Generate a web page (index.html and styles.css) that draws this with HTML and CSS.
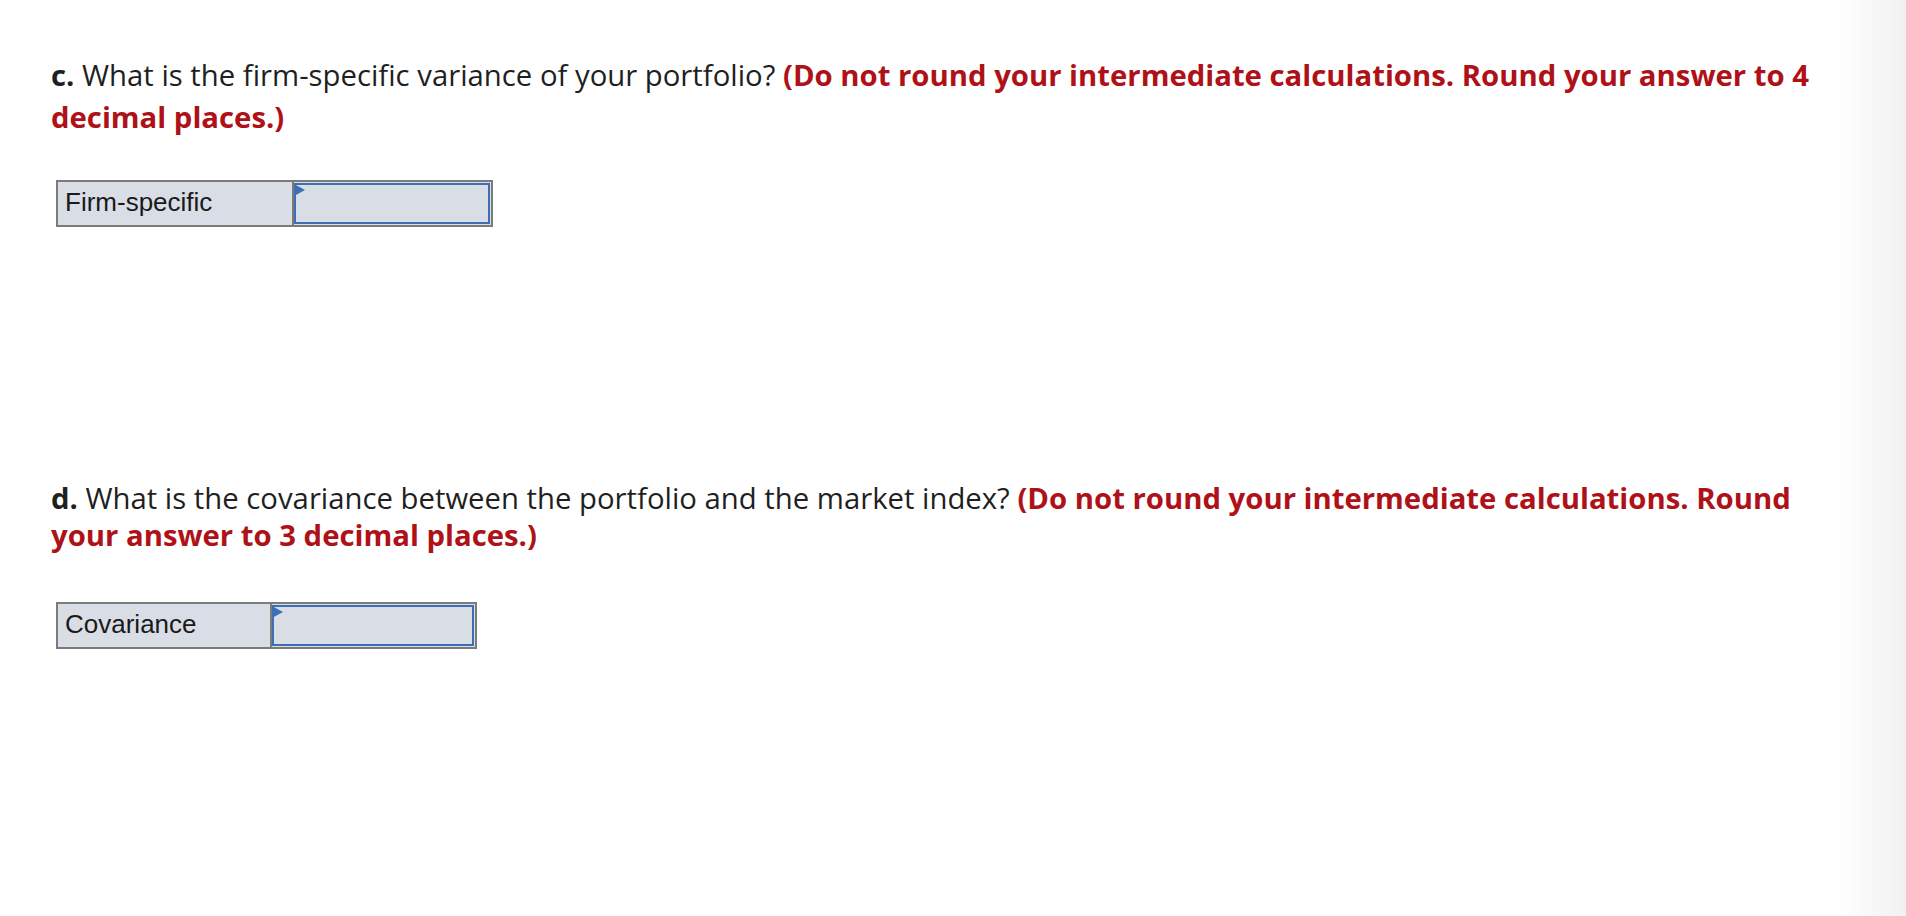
FILE: index.html
```html
<!DOCTYPE html>
<html lang="en">
<head>
<meta charset="utf-8">
<title>Portfolio questions</title>
<link rel="stylesheet" href="styles.css">
</head>
<body>
<main class="page">
  <section class="question q-c">
    <p class="prompt"><b class="part">c.</b> What is the firm-specific variance of your portfolio? <b class="note">(Do not round your intermediate calculations. Round your answer to 4 decimal places.)</b></p>
    <div class="answer">
      <div class="label label-c">Firm-specific</div>
      <div class="cell cell-c"><div class="field"></div></div>
    </div>
  </section>
  <section class="question q-d">
    <p class="prompt"><b class="part">d.</b> What is the covariance between the portfolio and the market index? <b class="note">(Do not round your intermediate calculations. Round your answer to 3 decimal places.)</b></p>
    <div class="answer">
      <div class="label label-d">Covariance</div>
      <div class="cell cell-d"><div class="field"></div></div>
    </div>
  </section>
</main>
</body>
</html>
```
FILE: styles.css
```css
html, body {
  margin: 0;
  padding: 0;
}
body {
  background: linear-gradient(to right, #ffffff 0, #ffffff calc(100% - 70px), #f1f1f1 100%);
  min-height: 916px;
  color: #1f1f1f;
  font-family: "Open Sans", "Lato", sans-serif;
}
.page {
  padding: 54px 0 0 51px;
  width: 1784px;
}
.question {
  display: flex;
  flex-direction: column;
  align-items: flex-start;
}
.q-d {
  margin-top: 253px;
}
.prompt {
  margin: 0;
  font-size: 29.3px;
  font-variant-ligatures: none;
}
.q-c .prompt {
  line-height: 42px;
  margin-bottom: 42px;
}
.q-d .prompt {
  line-height: 37px;
  margin-bottom: 48px;
}
.part {
  font-weight: 700;
  color: #1f1f1f;
}
.note {
  font-weight: 700;
  color: #ae1218;
}
.answer {
  display: flex;
  margin-left: 5px;
  border: 2px solid #7b7b7b;
  background: #d9dde6;
  height: 43px;
}
.label {
  box-sizing: border-box;
  height: 43px;
  padding-left: 7px;
  border-right: 2px solid #7b7b7b;
  font-family: "Liberation Sans", Arial, sans-serif;
  font-size: 26px;
  line-height: 41px;
  color: #1a1a1a;
}
.label-c { width: 236px; }
.label-d { width: 214px; }
.cell {
  box-sizing: border-box;
  height: 43px;
  padding: 1px 1px 1px 0;
}
.cell-c { width: 197px; }
.cell-d { width: 203px; }
.field {
  position: relative;
  box-sizing: border-box;
  height: 100%;
  border: 2px solid #3d70b2;
  background: #d9dde6;
}
.field::before {
  content: "";
  position: absolute;
  top: -1px;
  left: -2px;
  width: 0;
  height: 0;
  border-left: 11px solid #3d70b2;
  border-top: 6px solid transparent;
  border-bottom: 6px solid transparent;
}
```
